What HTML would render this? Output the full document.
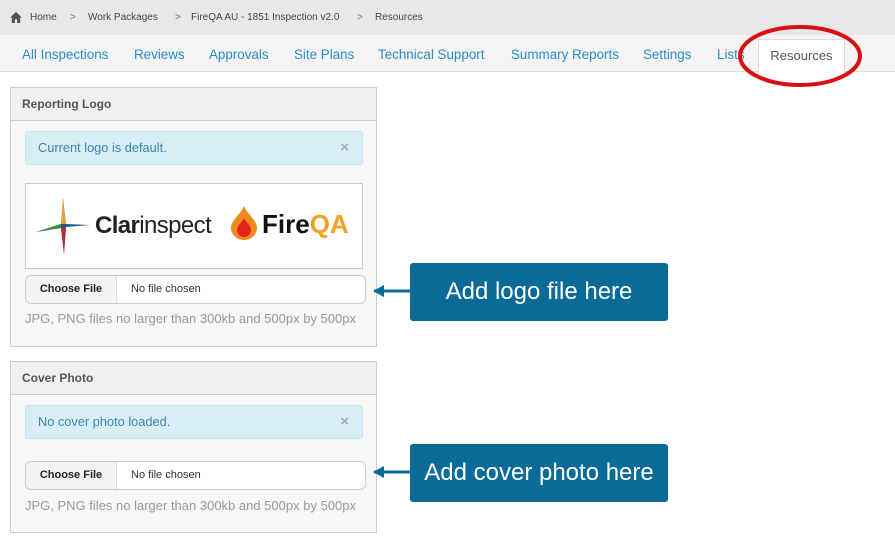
<!DOCTYPE html>
<html><head><style>
body{margin:0;width:895px;height:543px;background:#fff;font-family:"Liberation Sans",sans-serif;position:relative;overflow:hidden}
.bc{position:absolute;left:0;top:0;width:895px;height:35px;background:#e8e8e8;font-size:10px;color:#444}
.bc span{position:absolute;top:12px}
.nav{position:absolute;left:0;top:35px;width:895px;height:36px;background:#f4f4f4;border-bottom:1px solid #ddd}
.nav span{position:absolute;top:12px;font-size:13.4px;color:#2a8bc4}
.tab{position:absolute;left:758px;top:4px;width:85px;height:33px;background:#fff;border:1px solid #ddd;border-bottom:none;font-size:13px;color:#555;text-align:center;line-height:32px}
.panel{position:absolute;left:10px;width:365px;border:1px solid #ccc;background:#f7f7f7}
.ph{height:32px;border-bottom:1px solid #ccc;background:#f0f0f0;font-weight:bold;font-size:12px;color:#555;line-height:32px;padding-left:11px}
.alert{position:absolute;left:14px;width:336px;height:32px;background:#d9edf7;border:1px solid #bce8f1;border-radius:3px;color:#3a87ad;font-size:12.8px;line-height:32px}
.alert b{position:absolute;right:13px;top:0;color:#aaa;font-size:15px}
.alert i{font-style:normal;margin-left:12px}
.file{position:absolute;left:14px;width:339px;height:27px;border:1px solid #ccc;border-radius:6px;background:#fff;font-size:11px}
.file .b{position:absolute;left:0;top:0;width:90px;height:27px;background:#f3f3f3;border-right:1px solid #ddd;border-radius:6px 0 0 6px;font-weight:bold;text-align:center;line-height:26px;color:#222}
.file .t{position:absolute;left:105px;top:7px;color:#333}
.help{position:absolute;left:14px;font-size:13px;color:#999;white-space:nowrap}
.call{position:absolute;left:410px;width:258px;height:58px;background:#0a6b99;border-radius:3px;color:#fff;font-size:24px;text-align:center;line-height:57px}
</style></head><body>
<div class="bc">
<svg style="position:absolute;left:10px;top:12px" width="12" height="11" viewBox="0 0 12 11"><path d="M6 0L0 5.5h1.8V11h3V7.5h2.4V11h3V5.5H12z" fill="#555"/></svg>
<span style="left:30px">Home</span><span style="left:70px;color:#777">&gt;</span>
<span style="left:88px">Work Packages</span><span style="left:175px;color:#777">&gt;</span>
<span style="left:191px">FireQA AU - 1851 Inspection v2.0</span><span style="left:357px;color:#777">&gt;</span>
<span style="left:375px">Resources</span></div>
<div class="nav">
<span style="left:22px">All Inspections</span><span style="left:134px">Reviews</span><span style="left:209px">Approvals</span><span style="left:294px">Site Plans</span><span style="left:378px">Technical Support</span><span style="left:511px">Summary Reports</span><span style="left:643px">Settings</span><span style="left:717px">Lists</span>
<div class="tab">Resources</div></div>
<svg style="position:absolute;left:735px;top:22px" width="130" height="68"><ellipse cx="65" cy="34" rx="60" ry="29" fill="none" stroke="#d90f12" stroke-width="4"/></svg>

<div class="panel" style="top:87px;height:258px">
<div class="ph">Reporting Logo</div>
<div class="alert" style="top:43px"><i>Current logo is default.</i><b>×</b></div>
<div style="position:absolute;left:14px;top:95px;width:336px;height:84px;background:#fff;border:1px solid #ccc">
<svg style="position:absolute;left:10px;top:14px" width="55" height="56" viewBox="0 0 55 56"><path d="M27 0L30 26L54 27L30 29L28 56L25 30L0 34L25 26Z" fill="#1d5c8a"/><path d="M27 0L30 26L25 26Z" fill="#e7a035"/><path d="M25 30L0 34L25 26Z" fill="#3a8a3a"/><path d="M30 29L28 56L25 30Z" fill="#b8282c"/></svg>
<span style="position:absolute;left:69px;top:28px;font-size:24px;color:#222;letter-spacing:-0.6px"><b>Clar</b>inspect</span>
<svg style="position:absolute;left:205px;top:22px" width="26" height="34" viewBox="0 0 26 34"><path d="M13 0C16 8 26 14 26 22A13 12 0 0 1 0 22C0 14 10 8 13 0Z" fill="#f08a1d"/><path d="M13 12C15 17 20 19 20 24A7 7 0 0 1 6 24C6 19 11 17 13 12Z" fill="#e2231a"/></svg>
<span style="position:absolute;left:236px;top:25px;font-size:26px;font-weight:bold;color:#111">Fire<span style="color:#f0a422">QA</span></span>
</div>
<div class="file" style="top:187px"><div class="b">Choose File</div><div class="t">No file chosen</div></div>
<div class="help" style="top:223px">JPG, PNG files no larger than 300kb and 500px by 500px</div>
</div>

<div class="panel" style="top:361px;height:170px">
<div class="ph">Cover Photo</div>
<div class="alert" style="top:43px"><i>No cover photo loaded.</i><b>×</b></div>
<div class="file" style="top:99px"><div class="b">Choose File</div><div class="t">No file chosen</div></div>
<div class="help" style="top:136px">JPG, PNG files no larger than 300kb and 500px by 500px</div>
</div>

<svg style="position:absolute;left:372px;top:284px" width="40" height="14"><path d="M2 7H40" stroke="#0a6b99" stroke-width="3"/><path d="M1 7L12 1V13Z" fill="#0a6b99"/></svg>
<div class="call" style="top:263px">Add logo file here</div>
<svg style="position:absolute;left:372px;top:465px" width="40" height="14"><path d="M2 7H40" stroke="#0a6b99" stroke-width="3"/><path d="M1 7L12 1V13Z" fill="#0a6b99"/></svg>
<div class="call" style="top:444px">Add cover photo here</div>
</body></html>
